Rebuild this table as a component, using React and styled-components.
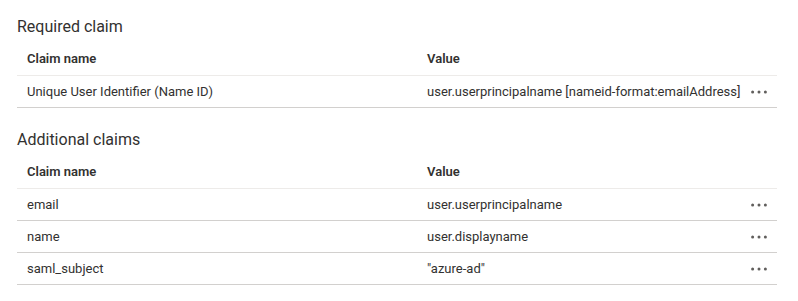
import React from "react";
import styled, { createGlobalStyle } from "styled-components";

const GlobalStyle = createGlobalStyle`
  html, body {
    margin: 0;
    padding: 0;
    background: #ffffff;
  }
  body {
    font-family: Roboto, "Liberation Sans", Arial, sans-serif;
    color: #323130;
    -webkit-font-smoothing: antialiased;
  }
`;

const Page = styled.div`
  width: 760px;
  padding: 16px 21px 0 17px;
  display: flex;
  flex-direction: column;
  gap: 21px;
`;

const Section = styled.section`
  display: flex;
  flex-direction: column;
`;

const Title = styled.h2`
  margin: 0 0 5px 0;
  font-size: 16px;
  line-height: 22px;
  font-weight: 400;
  color: #323130;
`;

const Table = styled.div`
  display: flex;
  flex-direction: column;
`;

const Row = styled.div`
  display: grid;
  grid-template-columns: 400px minmax(0, 1fr) 36px;
  align-items: center;
  box-sizing: border-box;
  height: ${(p) => (p.$header ? "33px" : "32px")};
  border-bottom: 1px solid ${(p) => (p.$header ? "#edebe9" : "#d2d0ce")};
`;

const Cell = styled.div`
  padding: 0 10px;
  font-size: 13px;
  line-height: 18px;
  font-weight: ${(p) => (p.$header ? 600 : 400)};
  color: #323130;
  white-space: nowrap;
  overflow: visible;
`;

const MoreButton = styled.button`
  display: flex;
  align-items: center;
  justify-content: flex-end;
  padding: 0 10px 0 0;
  margin: 0;
  border: 0;
  background: transparent;
  height: 100%;
  cursor: pointer;
`;

function MoreIcon() {
  return (
    <svg width="16" height="4" viewBox="0 0 16 4" aria-hidden="true">
      <circle cx="1.6" cy="2" r="1.5" fill="#605e5c" />
      <circle cx="8" cy="2" r="1.5" fill="#605e5c" />
      <circle cx="14.4" cy="2" r="1.5" fill="#605e5c" />
    </svg>
  );
}

function ClaimsTable({ rows }) {
  return (
    <Table>
      <Row $header>
        <Cell $header>Claim name</Cell>
        <Cell $header>Value</Cell>
        <span />
      </Row>
      {rows.map(([name, value]) => (
        <Row key={name}>
          <Cell>{name}</Cell>
          <Cell>{value}</Cell>
          <MoreButton aria-label="More actions">
            <MoreIcon />
          </MoreButton>
        </Row>
      ))}
    </Table>
  );
}

export default function App() {
  return (
    <>
      <GlobalStyle />
      <Page>
        <Section>
          <Title>Required claim</Title>
          <ClaimsTable
            rows={[
              [
                "Unique User Identifier (Name ID)",
                "user.userprincipalname [nameid-format:emailAddress]",
              ],
            ]}
          />
        </Section>
        <Section>
          <Title>Additional claims</Title>
          <ClaimsTable
            rows={[
              ["email", "user.userprincipalname"],
              ["name", "user.displayname"],
              ["saml_subject", '"azure-ad"'],
            ]}
          />
        </Section>
      </Page>
    </>
  );
}
